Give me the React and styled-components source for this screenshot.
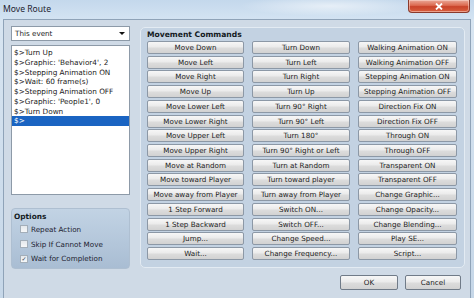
import styled, { createGlobalStyle } from "styled-components";

const GlobalStyle = createGlobalStyle`
  html, body {
    margin: 0;
    padding: 0;
    width: 474px;
    height: 298px;
    overflow: hidden;
    background: #cfdce9;
  }
  * { box-sizing: border-box; }
`;

const Frame = styled.div`
  width: 474px;
  height: 298px;
  display: flex;
  flex-direction: column;
  background: linear-gradient(180deg, #d9e6f2 0%, #c6d7e8 100%);
  font-family: "DejaVu Sans", Verdana, sans-serif;
  color: #1c1c1c;
`;

const TitleBar = styled.div`
  height: 19px;
  display: flex;
  align-items: flex-start;
  justify-content: space-between;
  padding-left: 3px;
  padding-right: 4px;
  background:
    radial-gradient(ellipse 90px 10px at 330px 6px, rgba(255,255,255,0.55), transparent),
    linear-gradient(180deg, #c4d8ec 0%, #d3e3f2 100%);
`;

const Title = styled.span`
  font-family: "Noto Sans", "Open Sans", sans-serif;
  font-size: 8.6px;
  line-height: 18px;
  color: #1e2430;
`;

const CloseButton = styled.div`
  width: 62px;
  height: 13px;
  display: flex;
  align-items: center;
  justify-content: center;
  border: 1px solid #8a3a2c;
  border-top: none;
  border-radius: 0 0 4px 4px;
  background: linear-gradient(180deg, #eaa898 0%, #dc6a50 45%, #c9432a 55%, #d9603f 100%);
  box-shadow: inset 0 0 0 1px rgba(255, 225, 215, 0.5);
`;

const Client = styled.div`
  flex: 1;
  margin: 0 3px 0 3px;
  border: 1px solid #8fa3b8;
  border-bottom: none;
  background: #cfdae6;
  display: flex;
  flex-direction: column;
  padding: 6px 5px 0 7px;
`;

const Main = styled.div`
  display: flex;
  gap: 10px;
`;

const LeftColumn = styled.div`
  width: 121px;
  display: flex;
  flex-direction: column;
`;

const Select = styled.div`
  height: 15px;
  background: #fff;
  border: 1px solid #8d9aa8;
  display: flex;
  align-items: center;
  justify-content: space-between;
  padding: 0 4px 0 3px;
  font-size: 7.2px;
`;

const Caret = styled.span`
  width: 0;
  height: 0;
  border-left: 3px solid transparent;
  border-right: 3px solid transparent;
  border-top: 3px solid #111;
`;

const List = styled.div`
  margin-top: 4px;
  height: 150px;
  background: #fff;
  border: 1px solid #8d9aa8;
  padding: 2px 0 0 0;
  display: flex;
  flex-direction: column;
`;

const ListItem = styled.div`
  height: 9.75px;
  line-height: 9.75px;
  font-size: 7.3px;
  padding-left: 2px;
  white-space: nowrap;
  color: ${({ $selected }) => ($selected ? "#ffffff" : "#1a1a1a")};
  background: ${({ $selected }) => ($selected ? "#1a64c2" : "transparent")};
`;

const OptionsBox = styled.div`
  margin-top: 13px;
  height: 61px;
  border-radius: 4px;
  border: 1px solid #aebfd1;
  background: linear-gradient(180deg, #c2d3e4 0%, #b3c6da 60%, #a9bdd3 100%);
  padding: 3px 0 0 2px;
`;

const GroupTitle = styled.div`
  font-weight: bold;
  font-size: 7.4px;
  line-height: 10px;
  color: #141a22;
`;

const CheckRow = styled.div`
  display: flex;
  align-items: center;
  gap: 3px;
  height: 14.7px;
  padding-left: 6px;
  font-size: 7.2px;
  color: #1c2230;
`;

const Box = styled.span`
  width: 8px;
  height: 8px;
  border: 1px solid #a3aeb9;
  background: linear-gradient(180deg, #e4e8ec, #f6f7f8);
  display: flex;
  align-items: center;
  justify-content: center;
  font-size: 6px;
  line-height: 1;
  color: #2c3a52;
`;

const CommandPanel = styled.div`
  width: 325px;
  height: 241px;
  margin-top: 1px;
  border-radius: 5px;
  border: 1px solid #e3ebf3;
  background: #c3d2e2;
  padding: 1px 8px 0 6px;
`;

const PanelTitle = styled(GroupTitle)`
  font-size: 7.6px;
  line-height: 11px;
`;

const CommandGrid = styled.div`
  margin-top: 1px;
  display: grid;
  grid-template-columns: 97px 98px 99px;
  column-gap: 8px;
  row-gap: 1.72px;
`;

const Cmd = styled.div`
  height: 13px;
  border: 1px solid #8c98a6;
  border-radius: 2px;
  background: linear-gradient(180deg, #f7f7f7 0%, #ebebeb 45%, #dcdcdc 55%, #d2d2d2 100%);
  display: flex;
  align-items: center;
  justify-content: center;
  font-size: 7.2px;
  color: #1d1d1d;
  white-space: nowrap;
  overflow: hidden;
`;

const Footer = styled.div`
  display: flex;
  justify-content: flex-end;
  gap: 7px;
  padding: 6px 4px 0 0;
`;

const DialogButton = styled(Cmd)`
  width: ${({ $w }) => $w}px;
  height: 15px;
  border-color: #707b88;
`;

const columns = [
  ["Move Down", "Move Left", "Move Right", "Move Up", "Move Lower Left", "Move Lower Right", "Move Upper Left", "Move Upper Right", "Move at Random", "Move toward Player", "Move away from Player", "1 Step Forward", "1 Step Backward", "Jump...", "Wait..."],
  ["Turn Down", "Turn Left", "Turn Right", "Turn Up", "Turn 90° Right", "Turn 90° Left", "Turn 180°", "Turn 90° Right or Left", "Turn at Random", "Turn toward player", "Turn away from Player", "Switch ON...", "Switch OFF...", "Change Speed...", "Change Frequency..."],
  ["Walking Animation ON", "Walking Animation OFF", "Stepping Animation ON", "Stepping Animation OFF", "Direction Fix ON", "Direction Fix OFF", "Through ON", "Through OFF", "Transparent ON", "Transparent OFF", "Change Graphic...", "Change Opacity...", "Change Blending...", "Play SE...", "Script..."],
];

const commands = columns[0].flatMap((_, i) => columns.map((col) => col[i]));

const routeItems = [
  "$>Turn Up",
  "$>Graphic: 'Behavior4', 2",
  "$>Stepping Animation ON",
  "$>Wait: 60 frame(s)",
  "$>Stepping Animation OFF",
  "$>Graphic: 'People1', 0",
  "$>Turn Down",
  "$>",
];

const options = [
  { label: "Repeat Action", checked: false },
  { label: "Skip If Cannot Move", checked: false },
  { label: "Wait for Completion", checked: true },
];

export default function App() {
  return (
    <>
      <GlobalStyle />
      <Frame>
        <TitleBar>
          <Title>Move Route</Title>
          <CloseButton>
            <svg width="8" height="7" viewBox="0 0 8 7">
              <path d="M1 0.5 L7 6.5 M7 0.5 L1 6.5" stroke="#fff" strokeWidth="1.8" />
            </svg>
          </CloseButton>
        </TitleBar>
        <Client>
          <Main>
            <LeftColumn>
              <Select>
                <span>This event</span>
                <Caret />
              </Select>
              <List>
                {routeItems.map((item, i) => (
                  <ListItem key={i} $selected={i === routeItems.length - 1}>
                    {item}
                  </ListItem>
                ))}
              </List>
              <OptionsBox>
                <GroupTitle>Options</GroupTitle>
                {options.map((o) => (
                  <CheckRow key={o.label}>
                    <Box>{o.checked ? "✓" : ""}</Box>
                    {o.label}
                  </CheckRow>
                ))}
              </OptionsBox>
            </LeftColumn>
            <CommandPanel>
              <PanelTitle>Movement Commands</PanelTitle>
              <CommandGrid>
                {commands.map((c, i) => (
                  <Cmd key={i}>{c}</Cmd>
                ))}
              </CommandGrid>
            </CommandPanel>
          </Main>
          <Footer>
            <DialogButton $w={58}>OK</DialogButton>
            <DialogButton $w={56}>Cancel</DialogButton>
          </Footer>
        </Client>
      </Frame>
    </>
  );
}
